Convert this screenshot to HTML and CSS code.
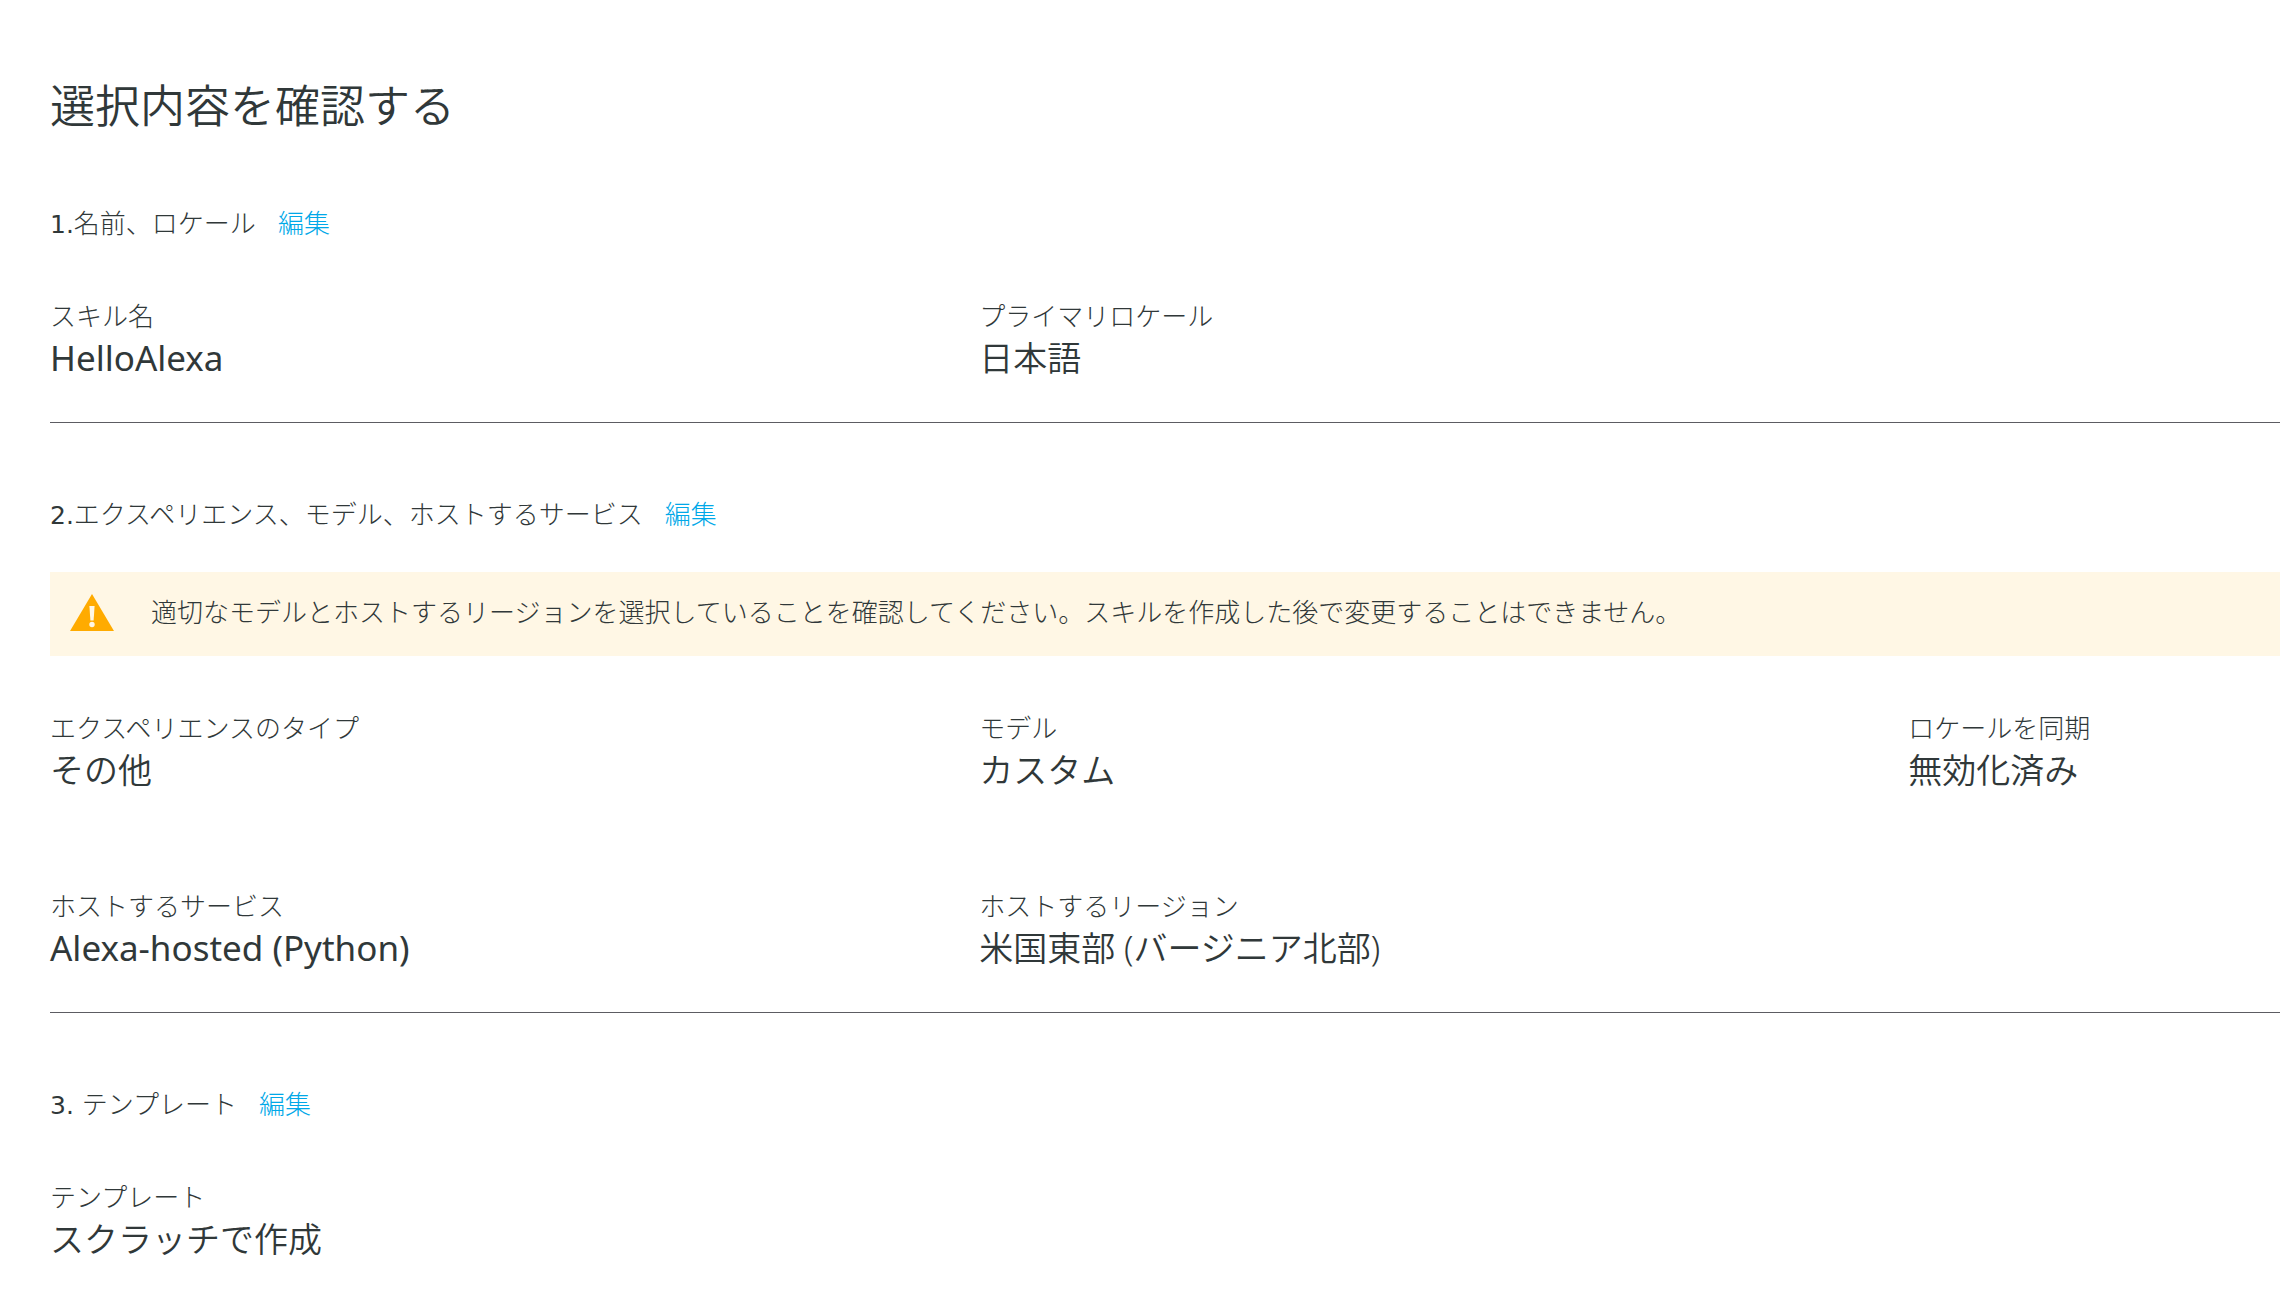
FILE: index.html
```html
<!DOCTYPE html>
<html lang="ja">
<head>
    <meta charset="UTF-8">
    <meta name="viewport" content="width=device-width, initial-scale=1.0">
    <title>選択内容を確認する</title>
    <link rel="stylesheet" href="styles.css">
</head>
<body>
    <main class="review">
        <h1>選択内容を確認する</h1>

        <section class="review-section">
            <div class="section-header">
                <h2><span class="number">1.</span>名前、ロケール</h2>
                <a href="#name" class="edit-link">編集</a>
            </div>
            <dl class="fields">
                <div class="field">
                    <dt>スキル名</dt>
                    <dd class="latin">HelloAlexa</dd>
                </div>
                <div class="field">
                    <dt>プライマリロケール</dt>
                    <dd>日本語</dd>
                </div>
            </dl>
        </section>

        <section class="review-section">
            <div class="section-header">
                <h2><span class="number">2.</span>エクスペリエンス、モデル、ホストするサービス</h2>
                <a href="#experience" class="edit-link">編集</a>
            </div>
            <div class="warning" role="alert">
                <svg class="warning-icon" viewBox="0 0 44 37" aria-hidden="true">
                    <path d="M22 0L44 37H0Z" fill="#ffab00"/>
                    <path d="M19.4 12h5.2l-1 14.5h-3.2Z" fill="#fff7e5"/>
                    <circle cx="22" cy="30.5" r="2.7" fill="#fff7e5"/>
                </svg>
                <p>適切なモデルとホストするリージョンを選択していることを確認してください。スキルを作成した後で変更することはできません。</p>
            </div>
            <dl class="fields">
                <div class="field">
                    <dt>エクスペリエンスのタイプ</dt>
                    <dd>その他</dd>
                </div>
                <div class="field">
                    <dt>モデル</dt>
                    <dd>カスタム</dd>
                </div>
                <div class="field">
                    <dt>ロケールを同期</dt>
                    <dd>無効化済み</dd>
                </div>
                <div class="field">
                    <dt>ホストするサービス</dt>
                    <dd class="latin">Alexa-hosted (Python)</dd>
                </div>
                <div class="field">
                    <dt>ホストするリージョン</dt>
                    <dd>米国東部 (バージニア北部)</dd>
                </div>
            </dl>
        </section>

        <section class="review-section">
            <div class="section-header">
                <h2><span class="number">3. </span>テンプレート</h2>
                <a href="#template" class="edit-link">編集</a>
            </div>
            <dl class="fields">
                <div class="field">
                    <dt>テンプレート</dt>
                    <dd>スクラッチで作成</dd>
                </div>
            </dl>
        </section>
    </main>
</body>
</html>
```
FILE: styles.css
```css
* {
    box-sizing: border-box;
}

body {
    margin: 0;
    background: #fff;
    color: #303839;
    font-family: "Noto Sans", "Noto Sans CJK JP", sans-serif;
    font-size: 26px;
    font-weight: 300;
    line-height: 36px;
}

h1, h2, p, dl, dd {
    margin: 0;
    font-weight: inherit;
}

.review {
    padding: 76px 0 0 50px;
}

h1 {
    margin-bottom: 69px;
    font-size: 45px;
    font-weight: 350;
    line-height: 60px;
}

.review-section {
    padding-bottom: 40px;
}

.review-section + .review-section {
    padding-top: 73px;
    border-top: 1px solid #5c5c62;
}

.review-section:last-child {
    padding-bottom: 0;
}

.section-header {
    display: flex;
    gap: 22px;
    margin-bottom: 57px;
}

h2 {
    font-size: 26px;
}

.number {
    font-family: "DejaVu Sans", sans-serif;
    font-size: 25px;
    font-weight: 400;
    line-height: 1;
}

.edit-link {
    color: #00a8e8;
    text-decoration: none;
}

.edit-link:hover {
    text-decoration: underline;
}

.warning {
    display: flex;
    align-items: flex-start;
    gap: 37px;
    margin: -17px 0 54px;
    padding: 22px 20px;
    min-height: 84px;
    background: #fff7e5;
}

.warning-icon {
    flex: none;
    width: 44px;
    height: 37px;
}

.fields {
    display: grid;
    grid-template-columns: 5fr 5fr 2fr;
    row-gap: 94px;
}

dd {
    font-size: 34px;
    font-weight: 350;
    line-height: 48px;
}

.latin {
    font-size: 35px;
    font-weight: 400;
}
```
